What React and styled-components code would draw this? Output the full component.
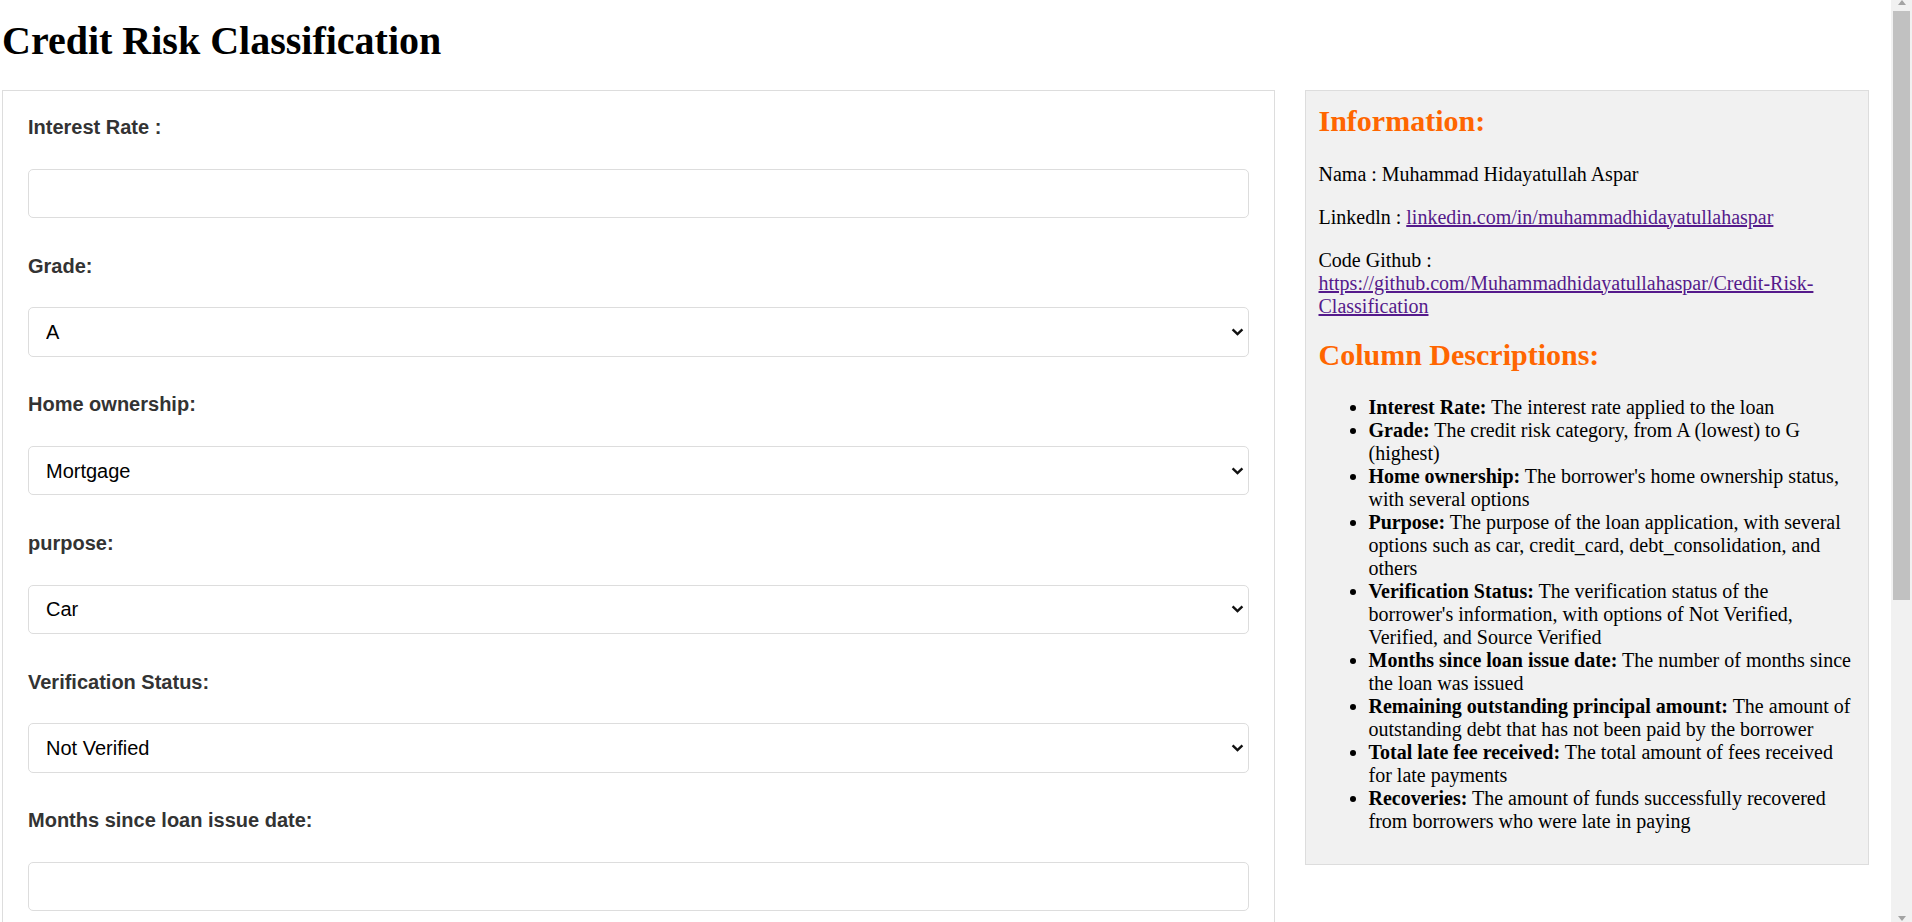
import React from "react";
import styled, { createGlobalStyle } from "styled-components";

const GlobalStyle = createGlobalStyle`
  html, body {
    margin: 0;
    padding: 0;
    background: #fff;
  }
  body {
    font-family: "Liberation Serif", "Times New Roman", serif;
    color: #000;
  }
  *, *::before, *::after {
    box-sizing: border-box;
  }
`;

const Page = styled.div`
  padding: 0 21px 18px 2px;
  display: flow-root;
`;

const Title = styled.h1`
  margin: 16.5px 0 26.5px;
  font-family: "Liberation Serif", "Times New Roman", serif;
  font-size: 40px;
  font-weight: bold;
  line-height: normal;
  color: #000;
`;

const Columns = styled.div`
  display: grid;
  grid-template-columns: 1273px 564px;
  column-gap: 30px;
  align-items: start;
`;

const FormPanel = styled.form`
  border: 1px solid #ddd;
  background: #fff;
  padding: 25px;
`;

const Field = styled.div`
  display: flex;
  flex-direction: column;
`;

const Label = styled.label`
  display: block;
  font-family: "Liberation Sans", Arial, sans-serif;
  font-size: 20px;
  font-weight: bold;
  line-height: 23px;
  color: #333;
  margin-bottom: 29.5px;
`;

const Control = styled.div`
  position: relative;
  height: 49.5px;
  margin-bottom: 36.7px;
`;

const TextInput = styled.input`
  display: block;
  width: 100%;
  height: 100%;
  margin: 0;
  padding: 0 17px;
  border: 1px solid #ddd;
  border-radius: 5px;
  background: #fff;
  font-family: "Liberation Sans", Arial, sans-serif;
  font-size: 20px;
  color: #000;
  outline: none;
`;

const Select = styled.select`
  display: block;
  width: 100%;
  height: 100%;
  margin: 0;
  padding: 0 40px 0 17px;
  border: 1px solid #ddd;
  border-radius: 5px;
  background: #fff;
  font-family: "Liberation Sans", Arial, sans-serif;
  font-size: 20px;
  color: #000;
  outline: none;
  appearance: none;
  -webkit-appearance: none;
`;

const Chevron = styled.svg`
  position: absolute;
  right: 5px;
  top: 50%;
  transform: translateY(-50%);
  pointer-events: none;
`;

const InfoPanel = styled.aside`
  background: #f1f1f1;
  border: 1px solid #ddd;
  padding: 13px 12.5px 11px;
  font-family: "Liberation Serif", "Times New Roman", serif;
  font-size: 20px;
  color: #000;
`;

const Heading = styled.h2`
  margin: 0 0 24.5px;
  font-size: 30px;
  font-weight: bold;
  line-height: normal;
  color: #ff6600;
`;

const Para = styled.p`
  margin: 20px 0;
  line-height: normal;
`;

const Link = styled.a`
  color: #551a8b;
  text-decoration: underline;
`;

const List = styled.ul`
  margin: 20px 0;
  padding-left: 50px;
  line-height: normal;
  list-style: disc;
`;

const Item = styled.li`
  margin: 0;
`;

/* Window scroll rail drawn over the right edge of the page */
const ScrollRail = styled.div`
  position: fixed;
  top: 0;
  right: 0;
  width: 21px;
  height: 100vh;
  background: #f1f1f1;
  display: flex;
  flex-direction: column;
  align-items: center;
`;

const RailButton = styled.div`
  height: 11px;
  width: 100%;
  display: flex;
  justify-content: center;
  align-items: ${(p) => (p.$down ? "flex-end" : "flex-start")};
  padding: ${(p) => (p.$down ? "0 0 1px" : "0")};
`;

const Arrow = styled.span`
  width: 0;
  height: 0;
  border-left: 4.5px solid transparent;
  border-right: 4.5px solid transparent;
  ${(p) =>
    p.$down
      ? "border-top: 5px solid #a3a3a3;"
      : "border-bottom: 5px solid #a3a3a3;"}
`;

const Thumb = styled.div`
  width: 17px;
  height: 589px;
  background: #c1c1c1;
`;

const RailSpacer = styled.div`
  flex: 1;
`;

function ChevronIcon() {
  return (
    <Chevron width="13" height="9" viewBox="0 0 13 9" aria-hidden="true">
      <path
        d="M1.6 1.8 L6.5 6.6 L11.4 1.8"
        fill="none"
        stroke="#111"
        strokeWidth="2.4"
      />
    </Chevron>
  );
}

const fields = [
  { id: "int_rate", label: "Interest Rate :", type: "input" },
  { id: "grade", label: "Grade:", type: "select", options: ["A", "B", "C", "D", "E", "F", "G"] },
  { id: "home_ownership", label: "Home ownership:", type: "select", options: ["Mortgage", "Own", "Rent", "Other"] },
  {
    id: "purpose",
    label: "purpose:",
    type: "select",
    options: ["Car", "Credit card", "Debt consolidation", "Home improvement", "House", "Major purchase", "Medical", "Other"],
  },
  { id: "verification_status", label: "Verification Status:", type: "select", options: ["Not Verified", "Verified", "Source Verified"] },
  { id: "mths_since_issue_d", label: "Months since loan issue date:", type: "input" },
  { id: "out_prncp", label: "Remaining outstanding principal amount:", type: "input" },
  { id: "total_rec_late_fee", label: "Total late fee received:", type: "input" },
  { id: "recoveries", label: "Recoveries:", type: "input" },
];

const descriptions = [
  ["Interest Rate:", "The interest rate applied to the loan"],
  ["Grade:", "The credit risk category, from A (lowest) to G (highest)"],
  ["Home ownership:", "The borrower's home ownership status, with several options"],
  ["Purpose:", "The purpose of the loan application, with several options such as car, credit_card, debt_consolidation, and others"],
  ["Verification Status:", "The verification status of the borrower's information, with options of Not Verified, Verified, and Source Verified"],
  ["Months since loan issue date:", "The number of months since the loan was issued"],
  ["Remaining outstanding principal amount:", "The amount of outstanding debt that has not been paid by the borrower"],
  ["Total late fee received:", "The total amount of fees received for late payments"],
  ["Recoveries:", "The amount of funds successfully recovered from borrowers who were late in paying"],
];

export default function App() {
  return (
    <>
      <GlobalStyle />
      <Page>
        <Title>Credit Risk Classification</Title>
        <Columns>
          <FormPanel onSubmit={(e) => e.preventDefault()}>
            {fields.map((f) => (
              <Field key={f.id}>
                <Label htmlFor={f.id}>{f.label}</Label>
                <Control>
                  {f.type === "input" ? (
                    <TextInput id={f.id} name={f.id} type="text" />
                  ) : (
                    <>
                      <Select id={f.id} name={f.id} defaultValue={f.options[0]}>
                        {f.options.map((o) => (
                          <option key={o} value={o}>
                            {o}
                          </option>
                        ))}
                      </Select>
                      <ChevronIcon />
                    </>
                  )}
                </Control>
              </Field>
            ))}
          </FormPanel>

          <InfoPanel>
            <Heading>Information:</Heading>
            <Para>Nama : Muhammad Hidayatullah Aspar</Para>
            <Para>
              Linkedln :{" "}
              <Link href="#linkedin">linkedin.com/in/muhammadhidayatullahaspar</Link>
            </Para>
            <Para>
              Code Github :{" "}
              <Link href="#github">
                https://github.com/Muhammadhidayatullahaspar/Credit-Risk-Classification
              </Link>
            </Para>
            <Heading>Column Descriptions:</Heading>
            <List>
              {descriptions.map(([term, text]) => (
                <Item key={term}>
                  <strong>{term}</strong> {text}
                </Item>
              ))}
            </List>
          </InfoPanel>
        </Columns>
      </Page>
      <ScrollRail aria-hidden="true">
        <RailButton>
          <Arrow />
        </RailButton>
        <Thumb />
        <RailSpacer />
        <RailButton $down>
          <Arrow $down />
        </RailButton>
      </ScrollRail>
    </>
  );
}
